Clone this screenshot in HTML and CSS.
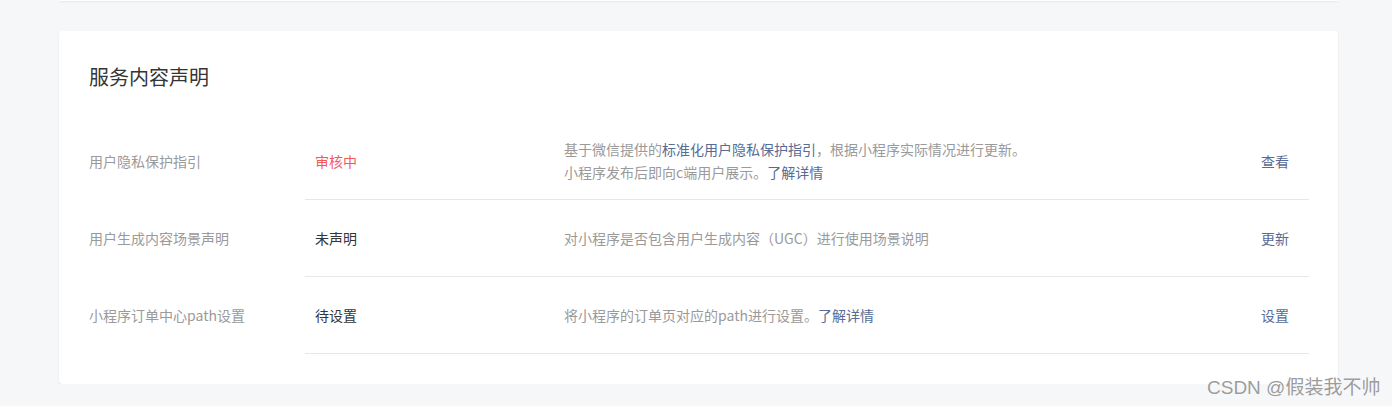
FILE: index.html
```html
<!DOCTYPE html>
<html lang="zh-CN">
<head>
    <meta charset="UTF-8">
    <meta name="viewport" content="width=device-width, initial-scale=1.0">
    <title>服务内容声明</title>
    <link rel="stylesheet" href="styles.css">
</head>
<body>

<main class="page">
    <!-- card above, scrolled mostly out of view -->
    <div class="card card-prev"></div>

    <section class="card">
        <h2 class="card-title">服务内容声明</h2>
        <table class="decl-table">
            <colgroup>
                <col class="col-label">
                <col class="col-status">
                <col>
                <col class="col-action">
            </colgroup>
            <tr>
                <td class="label">用户隐私保护指引</td>
                <td class="status status-review">审核中</td>
                <td class="desc">基于微信提供的<a href="#">标准化用户隐私保护指引</a>，根据小程序实际情况进行更新。<br>小程序发布后即向c端用户展示。<a href="#">了解详情</a></td>
                <td class="action"><a href="#">查看</a></td>
            </tr>
            <tr>
                <td class="label">用户生成内容场景声明</td>
                <td class="status">未声明</td>
                <td class="desc">对小程序是否包含用户生成内容（UGC）进行使用场景说明</td>
                <td class="action"><a href="#">更新</a></td>
            </tr>
            <tr>
                <td class="label">小程序订单中心path设置</td>
                <td class="status">待设置</td>
                <td class="desc">将小程序的订单页对应的path进行设置。<a href="#">了解详情</a></td>
                <td class="action"><a href="#">设置</a></td>
            </tr>
        </table>
    </section>
</main>

<div class="watermark">CSDN @假装我不帅</div>

</body>
</html>
```

FILE: styles.css
```css
body {
    font-family: "Noto Sans CJK SC", "Noto Sans", sans-serif;
    margin: 0;
    padding: 0;
    background-color: #f6f7f9;
    color: #353535;
    font-size: 14px;
}
a {
    color: #576b95;
    text-decoration: none;
}
.page {
    padding: 0 54px 0 59px;
    display: flex;
    flex-direction: column;
    gap: 30px;
}
.card {
    background: #fff;
    border-radius: 4px;
    box-shadow: 0 1px 2px rgba(0, 0, 0, 0.1);
    padding: 30px 29px 30px 30px;
}
.card-prev {
    height: 1px;
    padding: 0;
    border-radius: 0 0 4px 4px;
}
.card-title {
    font-size: 20px;
    font-weight: normal;
    line-height: 32px;
    margin: 0 0 30px;
    color: #353535;
}
.decl-table {
    width: 100%;
    border-collapse: collapse;
    table-layout: fixed;
}
.col-label {
    width: 216px;
}
.col-status {
    width: 249px;
}
.col-action {
    width: 100px;
}
.decl-table td {
    height: 76px;
    padding: 0 0 0 10px;
    line-height: 23px;
    vertical-align: middle;
    border-bottom: 1px solid #e7e7e7;
}
.decl-table td.label {
    padding-left: 0;
    color: #9a9a9a;
    border-bottom: none;
}
.status {
    color: #353535;
}
.status-review {
    color: #f25a5a;
}
.desc {
    color: #9a9a9a;
}
.decl-table td.action {
    text-align: right;
    padding-right: 20px;
}
.watermark {
    position: absolute;
    left: 1207px;
    top: 376px;
    font-family: "Liberation Sans", "Noto Sans CJK SC", sans-serif;
    font-size: 19px;
    line-height: 24px;
    color: #9c9c9c;
    text-shadow: 0 0 1px #fff, 0 0 1px #fff;
}
```
